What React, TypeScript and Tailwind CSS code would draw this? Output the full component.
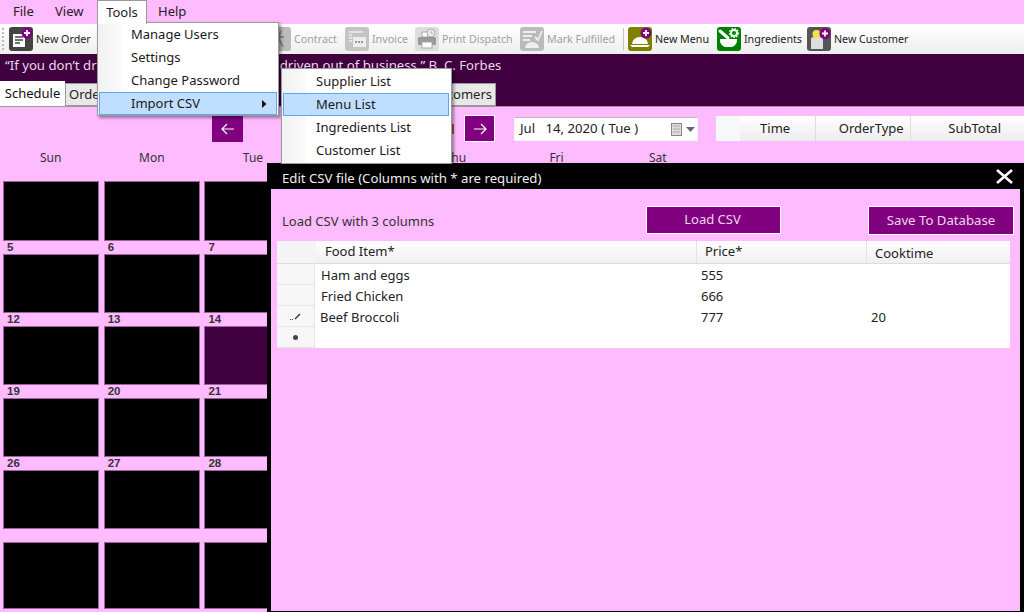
const ui = { fontFamily: '"Noto Sans", "Open Sans", sans-serif' };

const PlusBadge = ({ cx = 18, cy = 6 }: { cx?: number; cy?: number }) => (
  <g>
    <circle cx={cx} cy={cy} r="5.5" fill="#800080" />
    <path d={`M${cx - 3} ${cy}h6M${cx} ${cy - 3}v6`} stroke="#fff" strokeWidth="1.8" />
  </g>
);

const NewOrderIcon = () => (
  <svg width="24" height="24" viewBox="0 0 24 24">
    <rect width="24" height="24" rx="3" fill="#444" />
    <path d="M4 7h12v13H4z" fill="#fff" />
    <path d="M6 10h8M6 13h8M6 16h5" stroke="#444" strokeWidth="1.6" />
    <PlusBadge />
  </svg>
);

const NewMenuIcon = () => (
  <svg width="24" height="24" viewBox="0 0 24 24">
    <rect width="24" height="24" rx="3" fill="#808000" />
    <path d="M4 17a8 7 0 0 1 16 0z" fill="#fff" />
    <path d="M2 18h20l-2 2H4z" fill="#fff" />
    <PlusBadge />
  </svg>
);

const IngredientsIcon = () => (
  <svg width="24" height="24" viewBox="0 0 24 24">
    <rect width="24" height="24" rx="3" fill="#008000" />
    <path d="M3 12h17a8.500 8 0 0 1-5 8H8a8.500 8 0 0 1-5-8z" fill="#fff" />
    <path d="M3 4l8 7" stroke="#fff" strokeWidth="3" strokeLinecap="round" />
    <circle cx="17" cy="6" r="3" fill="none" stroke="#fff" strokeWidth="2" />
    <circle cx="17" cy="6" r="4.500" fill="none" stroke="#fff" strokeWidth="1.200" strokeDasharray="1.500 1.500" />
  </svg>
);

const NewCustomerIcon = () => (
  <svg width="24" height="24" viewBox="0 0 24 24">
    <rect width="24" height="24" rx="3" fill="#555" />
    <path d="M4 22V12q0-2 3-2h6q3 0 3 2v10z" fill="#ddd" />
    <circle cx="9.500" cy="7" r="4" fill="#f2e34a" />
    <PlusBadge cx={18} cy={6.500} />
  </svg>
);

const ContractIcon = () => (
  <svg width="24" height="24" viewBox="0 0 24 24">
    <rect width="24" height="24" rx="3" fill="#bbb" />
    <path d="M8 4l8 16M14 4l-6 16M5 10h12" stroke="#888" strokeWidth="2" fill="none" />
  </svg>
);

const InvoiceIcon = () => (
  <svg width="24" height="24" viewBox="0 0 24 24">
    <rect width="24" height="24" rx="3" fill="#c4c4c4" />
    <path d="M4 5h14M4 8h3M4 11h3M4 14h3" stroke="#eee" strokeWidth="1.500" />
    <rect x="8" y="10" width="13" height="10" fill="#eee" />
    <path d="M10 15h2M13 15h2M16 15h2" stroke="#999" strokeWidth="2" />
  </svg>
);

const PrintIcon = () => (
  <svg width="24" height="24" viewBox="0 0 24 24">
    <rect width="24" height="24" rx="3" fill="#ddd" />
    <path d="M7 10V5h6v5z" fill="#fff" stroke="#aaa" />
    <circle cx="16" cy="6" r="4" fill="#eee" stroke="#aaa" />
    <path d="M16 4v2l2 1" stroke="#aaa" fill="none" />
    <rect x="3" y="10" width="18" height="8" rx="1.500" fill="#999" />
    <rect x="7" y="15" width="10" height="6" fill="#fff" stroke="#aaa" />
  </svg>
);

const FulfilledIcon = () => (
  <svg width="24" height="24" viewBox="0 0 24 24">
    <rect width="24" height="24" rx="3" fill="#bbb" />
    <path d="M3 5h13M3 9h9M3 13h7" stroke="#eee" strokeWidth="1.800" />
    <path d="M5 21a7 6 0 0 1 14 0z" fill="#eee" />
    <path d="M15 10l3 3 4-9" stroke="#eee" strokeWidth="1.800" fill="none" />
  </svg>
);

function Tool({ icon, label, disabled, className }: { icon: React.ReactNode; label: string; disabled?: boolean; className: string }) {
  return (
    <div className={`flex shrink-0 items-center gap-[3px] text-[10.7px] ${disabled ? "text-[#a0a0a0]" : "text-[#1c1c1c]"} ${className}`}>
      <span className="shrink-0">{icon}</span>
      <span className="whitespace-nowrap">{label}</span>
    </div>
  );
}

const ArrowBtn = ({ dir, className }: { dir: "left" | "right"; className: string }) => (
  <div className={`flex h-[27px] w-[31px] shrink-0 items-center justify-center border bg-[#800080] ${className}`}>
    <svg width="14" height="12" viewBox="0 0 14 12" fill="none" stroke="#fff" strokeWidth="1.200">
      {dir === "left" ? <path d="M13 6H1M6 1L1 6l5 5" /> : <path d="M1 6h12M8 1l5 5-5 5" />}
    </svg>
  </div>
);

const days = ["Sun", "Mon", "Tue", "Wed", "Thu", "Fri", "Sat"];

const weeks: { cell: string; nums: (number | null)[] }[] = [
  { cell: "h-[60px]", nums: [null, null, null, null, null, null, null] },
  { cell: "h-[59px]", nums: [5, 6, 7, 8, 9, 10, 11] },
  { cell: "h-[59px]", nums: [12, 13, 14, 15, 16, 17, 18] },
  { cell: "h-[59px]", nums: [19, 20, 21, 22, 23, 24, 25] },
  { cell: "h-[59px]", nums: [26, 27, 28, 29, 30, 31, null] },
  { cell: "h-[67px]", nums: [null, null, null, null, null, null, null] },
];

const rows = [
  { mark: "", food: "Ham and eggs", price: "555", cook: "" },
  { mark: "", food: "Fried Chicken", price: "666", cook: "" },
  { mark: "edit", food: "Beef Broccoli", price: "777", cook: "20" },
  { mark: "new", food: "", price: "", cook: "" },
];

function MenuPopup({ items, active, className, gutter, indent, edge }: { items: string[]; active: string; className: string; gutter: string; indent: string; edge: string }) {
  return (
    <div className={`absolute z-30 flex flex-col border border-[#9a9a9a] bg-white shadow-[2px_2px_3px_rgba(0,0,0,0.4)] ${className}`}>
      <div className={`absolute bottom-0 left-0 top-0 bg-gradient-to-r from-[#f1f1f1] to-[#fafafa] ${gutter}`} />
      {items.map((item) => (
        <div
          key={item}
          className={`relative ml-[1px] flex h-[23px] items-center border text-[13px] text-[#1a1a1a] ${edge} ${item === active ? "border-[#5da7ee] bg-[#c0deff]" : "border-transparent"}`}
        >
          <span className={indent}>{item}</span>
          {item === "Import CSV" && (
            <svg className="absolute right-[9px] top-[7px]" width="5" height="8" viewBox="0 0 5 8">
              <path d="M0 0l4.500 4L0 8z" fill="#111" />
            </svg>
          )}
        </div>
      ))}
    </div>
  );
}

export default function App() {
  return (
    <div className="relative h-[612px] w-[1024px] overflow-hidden bg-[#ffbbff] text-[#222]" style={ui}>
      {/* menu bar */}
      <div className="flex h-[24px] items-center pl-[13px] text-[13px] text-[#222]">
        <span className="w-[42px]">File</span>
        <span className="w-[42px]">View</span>
        <span className="relative z-40 flex h-[24px] w-[50px] items-center justify-center border border-b-0 border-[#9a9a9a] bg-white">Tools</span>
        <span className="ml-[11px]">Help</span>
      </div>

      {/* toolbar */}
      <div className="flex h-[30px] items-center bg-gradient-to-b from-white to-[#eeeeee]">
        <div className="ml-[2px] h-[22px] w-[2px] border-l-2 border-dotted border-[#bbb]" />
        <Tool icon={<NewOrderIcon />} label="New Order" className="ml-[5px] w-[258px]" />
        <Tool icon={<ContractIcon />} label="Contract" disabled className="w-[78px]" />
        <Tool icon={<InvoiceIcon />} label="Invoice" disabled className="w-[70px]" />
        <Tool icon={<PrintIcon />} label="Print Dispatch" disabled className="w-[105px]" />
        <Tool icon={<FulfilledIcon />} label="Mark Fulfilled" disabled className="w-[103px]" />
        <div className="mr-[4px] h-[22px] w-px bg-[#c4c4c4]" />
        <Tool icon={<NewMenuIcon />} label="New Menu" className="w-[89px]" />
        <Tool icon={<IngredientsIcon />} label="Ingredients" className="w-[90px]" />
        <Tool icon={<NewCustomerIcon />} label="New Customer" className="w-[110px]" />
      </div>

      {/* quote and tabs */}
      <div className="flex h-[53px] flex-col justify-between border-b border-[#999] bg-[#400040]">
        <p className="ml-[5px] mt-[2px] whitespace-nowrap text-[13.2px] text-[#e8d8e8]">
          “If you don’t drive your business, you will be driven out of business.” B. C. Forbes
        </p>
        <div className="flex items-end text-[13px]">
          <div className="z-10 flex h-[25px] w-[65px] items-center justify-center bg-white text-[#111]">Schedule</div>
          <div className="flex h-[23px] w-[64px] items-center border border-[#999] bg-[#e8e8e8] pl-[3px]">Orders</div>
          <div className="w-[290px]" />
          <div className="flex h-[23px] w-[77px] items-center justify-end border border-[#999] bg-[#e8e8e8] pr-[3px] pt-[1px]">Customers</div>
        </div>
      </div>

      {/* date nav */}
      <div className="mt-[8px] flex h-[27px] items-start">
        <ArrowBtn dir="left" className="ml-[212px] border-[#800080]" />
        <div className="flex h-[27px] w-[221px] shrink-0 items-center pl-[209px]">
          <div className="h-[10px] w-[2px] bg-[#a05a30]" />
        </div>
        <ArrowBtn dir="right" className="border-white" />
        <div className="ml-[19px] mt-[2px] flex h-[24px] w-[184px] items-center justify-between border border-[#f5f5f5] border-t-[#bbb] bg-white pl-[5px] pr-[2px] text-[13.2px] text-[#222]">
          <span className="whitespace-pre">Jul   14, 2020 ( Tue )</span>
          <span className="flex items-center gap-[3px]">
            <svg width="12" height="13" viewBox="0 0 12 13">
              <rect x=".5" y=".5" width="10" height="12" fill="#ddd" stroke="#888" />
              <path d="M2 3h7M2 6h7M2 9h7" stroke="#aaa" />
            </svg>
            <svg width="9" height="5" viewBox="0 0 9 5">
              <path d="M0 0h9L4.500 5z" fill="#667" />
            </svg>
          </span>
        </div>
        <div className="ml-[18px] mt-[1px] flex h-[25px] w-[309px] bg-[#f7f8fa] text-[13px] text-[#222]">
          <div className="w-[24px]" />
          <div className="flex w-[76px] items-center justify-center border-r border-[#ddd] bg-gradient-to-b from-white to-[#ececee] pr-[4px]">Time</div>
          <div className="flex w-[95px] items-center justify-end border-r border-[#ddd] bg-gradient-to-b from-white to-[#ececee] pr-[6px]">OrderType</div>
          <div className="flex flex-1 items-center justify-end bg-gradient-to-b from-white to-[#ececee] pr-[23px]">SubTotal</div>
        </div>
      </div>

      {/* calendar */}
      <div className="mt-[4px] flex pl-[4px] text-[12px] text-[#333]">
        {days.map((d) => (
          <div key={d} className="flex h-[27px] w-[101.2px] shrink-0 items-start justify-center pr-[8px] pt-[3px]">{d}</div>
        ))}
      </div>
      <div className="mt-[-5.500px] flex w-[708px] flex-col pl-[3px]" style={{ fontFamily: '"Liberation Sans", Arial, sans-serif' }}>
        {weeks.map((w, i) => (
          <div key={i} className="grid grid-cols-7">
            {w.nums.map((n, j) => (
              <div key={j} className="w-[96px]">
                <div className="h-[13px] pl-[4px] text-[11.5px] font-bold leading-[13px] text-[#333]">{n}</div>
                <div className={`${w.cell} border border-[#a060a0] ${n === 14 ? "bg-[#400040]" : "bg-black"}`} />
              </div>
            ))}
          </div>
        ))}
      </div>

      {/* menus */}
      <MenuPopup
        items={["Manage Users", "Settings", "Change Password", "Import CSV"]}
        active="Import CSV"
        gutter="w-[23px]"
        indent="pl-[31px]"
        edge="mr-[1px]"
        className="left-[97px] top-[22px] w-[182px]"
      />
      <MenuPopup
        items={["Supplier List", "Menu List", "Ingredients List", "Customer List"]}
        active="Menu List"
        gutter="w-[24px]"
        indent="pl-[32px]"
        edge="mr-[2px]"
        className="left-[281px] top-[68px] w-[171px] py-[1px]"
      />

      {/* csv dialog */}
      <div className="absolute left-[267px] top-[163px] z-20 flex h-[449px] w-[757px] flex-col border-b border-l-4 border-r-4 border-black bg-[#ffbbff]">
        <div className="-mx-[4px] flex h-[26px] shrink-0 items-center justify-between bg-black pl-[15px] pr-[10px] text-[13.2px] text-[#eee]">
          <span className="pt-[6px]">Edit CSV file (Columns with * are required)</span>
          <svg width="19" height="15" viewBox="0 0 19 15" stroke="#fff" strokeWidth="2.600" fill="none">
            <path d="M2 1l15 13M17 1L2 14" />
          </svg>
        </div>
        <div className="flex h-[52px] items-start text-[13px]">
          <span className="ml-[11px] mt-[23px] w-[364px] text-[#333]">Load CSV with 3 columns</span>
          <div className="mt-[17px] flex h-[28px] w-[135px] items-center justify-center border border-white bg-[#800080] pr-[2px] text-[#f0d8f0]">Load CSV</div>
          <div className="ml-[87px] mt-[17px] flex h-[29px] w-[146px] items-center justify-center border border-white bg-[#800080] text-[13.2px] text-[#f0d8f0]">Save To Database</div>
        </div>
        <div className="ml-[6px] flex w-[733px] flex-col bg-white text-[13px] text-[#222]">
          <div className="flex h-[23px] border-b border-[#ddd]">
            <div className="w-[39px] bg-[#f4f4f6]" />
            <div className="w-[381px] border-r border-[#e2e2e2] bg-gradient-to-b from-white to-[#f0f0f2] pl-[9px] pt-[1px]">Food Item*</div>
            <div className="w-[170px] border-r border-[#e2e2e2] bg-gradient-to-b from-white to-[#f0f0f2] pl-[8px] pt-[1px]">Price*</div>
            <div className="flex-1 bg-gradient-to-b from-white to-[#f0f0f2] pl-[8px] pt-[3px]">Cooktime</div>
          </div>
          {rows.map((r) => (
            <div key={r.food + r.mark} className="flex h-[21px] items-center">
              <div className="flex h-full w-[38px] items-center justify-center border-b border-r border-[#e6e6e6] bg-[#f6f6f6]">
                {r.mark === "edit" && (
                  <svg width="11" height="7" viewBox="0 0 11 7" fill="none" stroke="#444">
                    <path d="M5 6l5-5" strokeWidth="1.600" />
                    <path d="M0 6.500h3" strokeDasharray="1 1" />
                  </svg>
                )}
                {r.mark === "new" && <span className="h-[5px] w-[5px] rounded-full bg-[#444]" />}
              </div>
              <div className={`w-[381px] pt-[3px] ${r.mark === "edit" ? "pl-[5px]" : "pl-[6px]"}`}>{r.food}</div>
              <div className="w-[170px] pl-[5px] pt-[3px]">{r.price}</div>
              <div className="flex-1 pl-[5px] pt-[3px]">{r.cook}</div>
            </div>
          ))}
        </div>
      </div>
    </div>
  );
}
